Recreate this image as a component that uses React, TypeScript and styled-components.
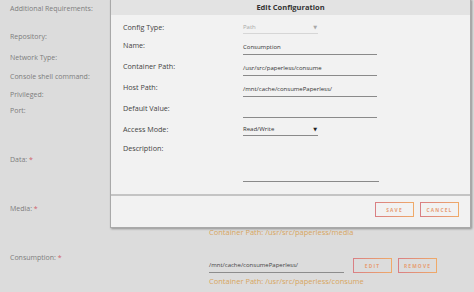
import React from "react";
import styled, { createGlobalStyle } from "styled-components";

const GlobalStyle = createGlobalStyle`
    html, body {
        margin: 0;
        padding: 0;
        background: #dcdcdc;
        font-family: "Open Sans", "DejaVu Sans", sans-serif;
        overflow: hidden;
    }
    #root {
        width: 474px;
        height: 292px;
    }
`;

const Page = styled.div`
    position: relative;
    width: 474px;
    height: 292px;
    background: #dcdcdc;
    display: flex;
    flex-direction: column;
`;

const Row = styled.div<{ h: number }>`
    display: flex;
    height: ${({ h }) => h}px;
    flex-shrink: 0;
`;

const RowLabel = styled.div`
    width: 209px;
    padding-left: 10px;
    padding-top: 4px;
    box-sizing: border-box;
    font-size: 7px;
    line-height: 10px;
    color: #7d7d7d;
`;

const Star = styled.span`
    color: #d0606a;
`;

const RowValue = styled.div`
    flex: 1;
    display: flex;
    flex-direction: column;
    padding-top: 9px;
`;

const VolumeLine = styled.div`
    display: flex;
    align-items: flex-start;
    gap: 6px;
`;

const PathInput = styled.div`
    width: 135px;
    height: 14px;
    margin-right: 3px;
    margin-top: 1px;
    box-sizing: border-box;
    border-bottom: 1px solid #8c8c8c;
    font-size: 6px;
    line-height: 12px;
    color: #444;
`;

const OutlineButton = styled.button`
    width: 39px;
    height: 15px;
    padding: 0;
    background: transparent;
    border: 1.5px solid transparent;
    border-image: linear-gradient(90deg, #d97f84, #f0aa68) 1;
    font-family: "Open Sans", "DejaVu Sans", sans-serif;
    font-size: 4.8px;
    font-weight: 700;
    letter-spacing: 1.2px;
    color: #e79c72;
    box-sizing: border-box;
`;

const Caption = styled.div`
    margin-top: 3px;
    font-size: 7.5px;
    line-height: 10px;
    color: #d8a65e;
`;

const Dialog = styled.div`
    position: absolute;
    left: 110px;
    top: -1px;
    width: 361px;
    height: 229px;
    background: #f2f2f2;
    border: 1px solid #a9a9a9;
    box-shadow: 1px 1px 2px rgba(0, 0, 0, 0.35);
    display: flex;
    flex-direction: column;
    box-sizing: border-box;
`;

const DialogHeader = styled.div`
    height: 15px;
    flex-shrink: 0;
    background: #e3e3e3;
    text-align: center;
    font-size: 7.5px;
    font-weight: 700;
    line-height: 14px;
    color: #333;
`;

const DialogBody = styled.div`
    flex: 1;
    padding: 3px 0 0 12px;
    display: flex;
    flex-direction: column;
    border-bottom: 2px solid #c4c4c4;
`;

const Field = styled.div<{ h: number }>`
    display: flex;
    height: ${({ h }) => h}px;
    flex-shrink: 0;
`;

const FieldLabel = styled.div`
    width: 120px;
    padding-top: 4px;
    font-size: 7.2px;
    line-height: 10px;
    color: #444;
`;

const TextInput = styled.div<{ w?: number }>`
    width: ${({ w }) => w ?? 134}px;
    height: 14px;
    margin-top: 5px;
    box-sizing: border-box;
    border-bottom: 1px solid #8a8a8a;
    font-size: 6px;
    line-height: 13px;
    color: #333;
`;

const SelectBox = styled.div<{ disabled?: boolean }>`
    width: 75px;
    height: 13px;
    margin-top: 3px;
    box-sizing: border-box;
    border-bottom: 1px solid ${({ disabled }) => (disabled ? "#d6d6d6" : "#8a8a8a")};
    display: flex;
    justify-content: space-between;
    align-items: center;
    padding-right: 1px;
    font-size: 6px;
    color: ${({ disabled }) => (disabled ? "#a8a8a8" : "#333")};
`;

const Arrow = styled.span<{ disabled?: boolean }>`
    font-size: 5px;
    color: ${({ disabled }) => (disabled ? "#a8a8a8" : "#222")};
`;

const TextArea = styled.div`
    width: 136px;
    height: 38px;
    margin-top: 5px;
    box-sizing: border-box;
    border-bottom: 1px solid #8a8a8a;
`;

const DialogFooter = styled.div`
    height: 31px;
    flex-shrink: 0;
    display: flex;
    justify-content: flex-end;
    align-items: flex-start;
    gap: 6px;
    padding: 6px 11px 0 0;
    box-sizing: border-box;
`;

const Volume: React.FC<{ host: string; container: string }> = ({ host, container }) => (
    <RowValue>
        <VolumeLine>
            <PathInput>{host}</PathInput>
            <OutlineButton>EDIT</OutlineButton>
            <OutlineButton>REMOVE</OutlineButton>
        </VolumeLine>
        <Caption>Container Path: {container}</Caption>
    </RowValue>
);

const App: React.FC = () => {
    return (
        <>
            <GlobalStyle />
            <Page>
                <Row h={28}>
                    <RowLabel>Additional Requirements:</RowLabel>
                </Row>
                <Row h={21}>
                    <RowLabel>Repository:</RowLabel>
                </Row>
                <Row h={19}>
                    <RowLabel>Network Type:</RowLabel>
                </Row>
                <Row h={18}>
                    <RowLabel>Console shell command:</RowLabel>
                </Row>
                <Row h={16}>
                    <RowLabel>Privileged:</RowLabel>
                </Row>
                <Row h={49}>
                    <RowLabel>Port:</RowLabel>
                </Row>
                <Row h={49}>
                    <RowLabel>
                        Data: <Star>*</Star>
                    </RowLabel>
                    <Volume host="/mnt/cache/appdata/paperless/data/" container="/usr/src/paperless/data" />
                </Row>
                <Row h={49}>
                    <RowLabel>
                        Media: <Star>*</Star>
                    </RowLabel>
                    <Volume host="/mnt/cache/paperless/media/" container="/usr/src/paperless/media" />
                </Row>
                <Row h={43}>
                    <RowLabel>
                        Consumption: <Star>*</Star>
                    </RowLabel>
                    <Volume host="/mnt/cache/consumePaperless/" container="/usr/src/paperless/consume" />
                </Row>

                <Dialog>
                    <DialogHeader>Edit Configuration</DialogHeader>
                    <DialogBody>
                        <Field h={18}>
                            <FieldLabel>Config Type:</FieldLabel>
                            <SelectBox disabled>
                                <span>Path</span>
                                <Arrow disabled>▼</Arrow>
                            </SelectBox>
                        </Field>
                        <Field h={21}>
                            <FieldLabel>Name:</FieldLabel>
                            <TextInput>Consumption</TextInput>
                        </Field>
                        <Field h={21}>
                            <FieldLabel>Container Path:</FieldLabel>
                            <TextInput>/usr/src/paperless/consume</TextInput>
                        </Field>
                        <Field h={21}>
                            <FieldLabel>Host Path:</FieldLabel>
                            <TextInput>/mnt/cache/consumePaperless/</TextInput>
                        </Field>
                        <Field h={21}>
                            <FieldLabel>Default Value:</FieldLabel>
                            <TextInput />
                        </Field>
                        <Field h={19}>
                            <FieldLabel>Access Mode:</FieldLabel>
                            <SelectBox>
                                <span>Read/Write</span>
                                <Arrow>▼</Arrow>
                            </SelectBox>
                        </Field>
                        <Field h={51}>
                            <FieldLabel>Description:</FieldLabel>
                            <TextArea />
                        </Field>
                    </DialogBody>
                    <DialogFooter>
                        <OutlineButton>SAVE</OutlineButton>
                        <OutlineButton>CANCEL</OutlineButton>
                    </DialogFooter>
                </Dialog>
            </Page>
        </>
    );
};

export default App;
